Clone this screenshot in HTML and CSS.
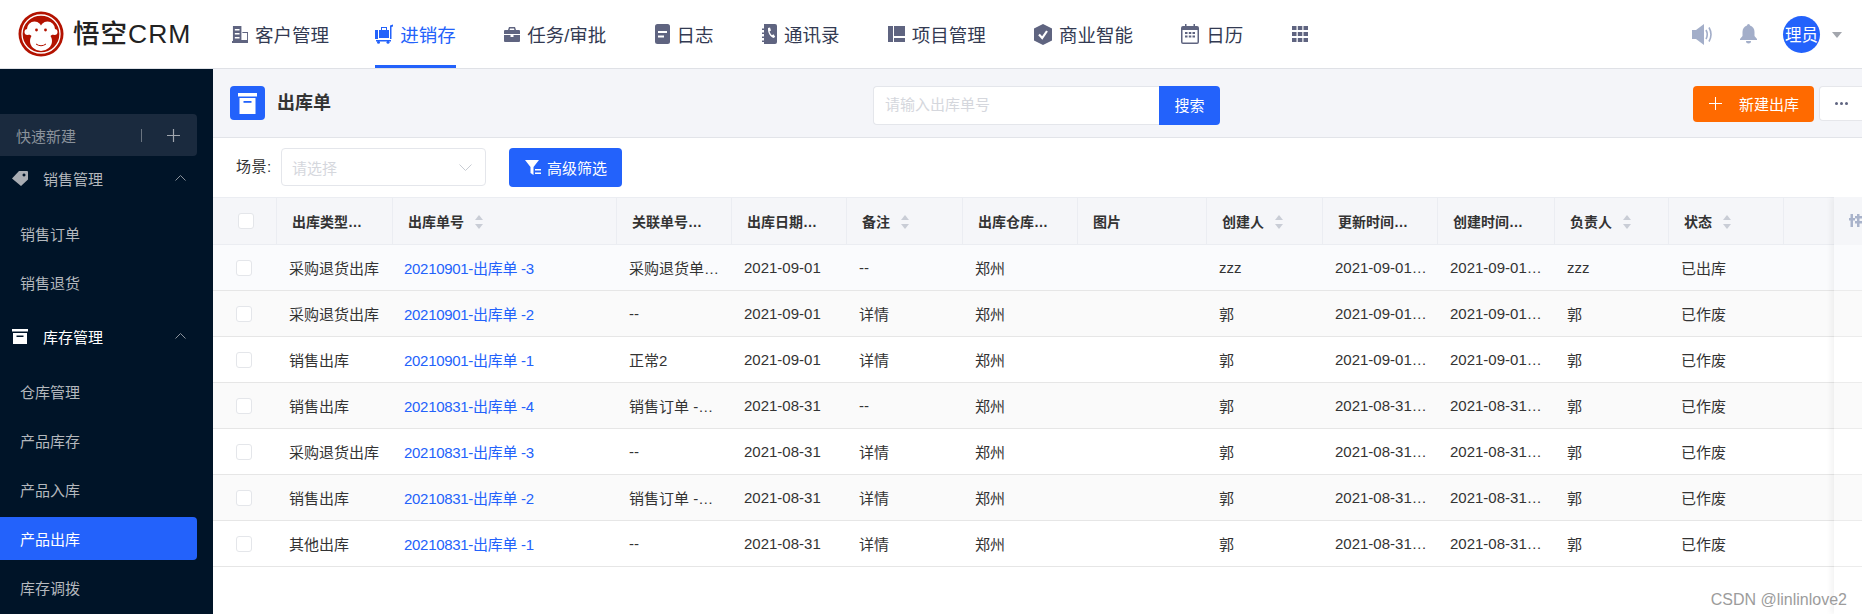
FILE: index.html
```html
<!DOCTYPE html>
<html lang="zh-CN">
<head>
    <meta charset="UTF-8">
    <title>悟空CRM - 出库单</title>
    <link rel="stylesheet" href="styles.css">
</head>
<body>
    <div class="app">
        <header class="navbar">
            <div class="logo">
                <svg width="46" height="46" viewBox="0 0 46 46">
                    <circle cx="23" cy="23" r="22.5" fill="#b31200"/>
                    <circle cx="23" cy="23" r="19" fill="none" stroke="#fff" stroke-width="1.3"/>
                    <circle cx="9.5" cy="21" r="3" fill="#fff"/>
                    <circle cx="36.5" cy="21" r="3" fill="#fff"/>
                    <circle cx="16.5" cy="18" r="7.5" fill="#fff"/>
                    <circle cx="29.5" cy="18" r="7.5" fill="#fff"/>
                    <ellipse cx="23" cy="30" rx="11" ry="10" fill="#fff"/>
                    <circle cx="18.5" cy="19" r="1.4" fill="#b31200"/>
                    <circle cx="27.5" cy="19" r="1.4" fill="#b31200"/>
                    <path d="M18 33q5 3.5 10 0" fill="none" stroke="#b31200" stroke-width="1"/>
                </svg>
                <span class="logo-text">悟空CRM</span>
            </div>
            <nav class="nav-list">
                <a class="nav-item">
                    <svg width="16" height="18" viewBox="0 0 17 18" preserveAspectRatio="none"><path fill="#5f6480" d="M1 1h9v14h6V8h-5V7h6v9h1v2H0v-2h1z"/><path fill="#fff" d="M3 4h5v1.6H3zM3 8h5v1.6H3zM3 12h5v1.6H3zM12 10h2v1.4h-2z"/></svg>
                    客户管理
                </a>
                <a class="nav-item active">
                    <svg width="18" height="20" viewBox="0 0 18 20"><path fill="#2362fb" d="M0 6h3v9H0zM4 6h2V3h6v3h2v8H4zM7 4v2h4V4zM15 1.500l3-1v2l-1.500.5V15h-1.500zM1 16h15v1.500H1z"/><circle cx="3.500" cy="18.300" r="1.500" fill="#2362fb"/><circle cx="13" cy="18.300" r="1.500" fill="#2362fb"/></svg>
                    进销存
                </a>
                <a class="nav-item">
                    <svg width="16" height="17" viewBox="0 0 16 17"><path fill="#5f6480" d="M5 1h6l1 3h3a1 1 0 0 1 1 1v3H0V5a1 1 0 0 1 1-1h3zM6 2.500L5.600 4h4.800L10 2.500zM0 9h6.500v2h3V9H16v6a1 1 0 0 1-1 1H1a1 1 0 0 1-1-1z"/></svg>
                    任务/审批
                </a>
                <a class="nav-item">
                    <svg width="15" height="20" viewBox="0 0 15 20"><rect width="15" height="20" rx="2.500" fill="#5f6480"/><path fill="#fff" d="M3 7h9v2H3zM3 11.500h6v2H3z"/></svg>
                    日志
                </a>
                <a class="nav-item">
                    <svg width="15" height="20" viewBox="0 0 15 20"><path fill="#5f6480" d="M2 0h11a2 2 0 0 1 2 2v16a2 2 0 0 1-2 2H2v-2H0v-1.500h2V14H0v-1.500h2V10H0V8.500h2V6H0V4.500h2z"/><path fill="#fff" d="M6 4l2-.5 1 3-1.500 1c.5 1.500 1.300 2.800 2.500 3.700l1.500-.9 1.700 2.500-1.500 1.200C8.500 13.500 5.500 8.500 6 4z"/></svg>
                    通讯录
                </a>
                <a class="nav-item">
                    <svg width="17" height="16" viewBox="0 0 17 16"><path fill="#5f6480" d="M0 0h5v16H0zM6 0h11v10H6zM6 12h11v4H6z"/></svg>
                    项目管理
                </a>
                <a class="nav-item">
                    <svg width="18" height="21" viewBox="0 0 18 21"><path fill="#5f6480" d="M9 0l9 4.500v12L9 21l-9-4.500v-12z"/><path fill="none" stroke="#fff" stroke-width="2.200" d="M5 10.500l3.200 3.500L13 7"/></svg>
                    商业智能
                </a>
                <a class="nav-item">
                    <svg width="18" height="20" viewBox="0 0 18 20"><path fill="#5f6480" d="M4 0h1.500v2h7V0H14v2h2a2 2 0 0 1 2 2v14a2 2 0 0 1-2 2H2a2 2 0 0 1-2-2V4a2 2 0 0 1 2-2h2zM1.500 6v12a.5.5 0 0 0 .5.5h14a.5.5 0 0 0 .5-.5V6z"/><path fill="#5f6480" d="M4 8h2.500v2H4zM7.800 8h2.500v2H7.800zM11.500 8H14v2h-2.500zM4 11.500h2.500v2H4zM7.800 11.500h2.500v2H7.800zM11.500 11.500H14v2h-2.500z"/></svg>
                    日历
                </a>
                <a class="nav-item">
                    <svg width="16" height="16" viewBox="0 0 16 16"><path fill="#5f6480" d="M0 0h4.500v4H0zM5.800 0h4.500v4H5.800zM11.500 0H16v4h-4.500zM0 6h4.500v4H0zM5.800 6h4.500v4H5.800zM11.500 6H16v4h-4.500zM0 12h4.500v4H0zM5.800 12h4.500v4H5.800zM11.500 12H16v4h-4.500z"/></svg>
                </a>
            </nav>
            <div class="nav-right">
                <svg class="speaker" width="20" height="21" viewBox="0 0 20 21"><path fill="#a3aec9" d="M0 6h4l8-6v21l-8-6H0z"/><path fill="none" stroke="#a3aec9" stroke-width="1.600" d="M14 6q2.500 4.500 0 9M17 3.500q4 7 0 14"/></svg>
                <svg class="bell" width="17" height="20" viewBox="0 0 17 20"><path fill="#a3aec9" d="M7 1.500a1.500 1.500 0 0 1 3 0C13 2.500 14.500 5 14.500 8v4l2.500 3v1H0v-1l2.500-3V8C2.500 5 4 2.500 7 1.500zM6 17h5a2.500 2.500 0 0 1-5 0z"/></svg>
                <div class="avatar">理员</div>
                <span class="caret"></span>
            </div>
        </header>

        <div class="layout">
            <aside class="sidebar">
                <div class="quick-add">
                    <span class="quick-text">快速新建</span>
                    <span class="quick-line"></span>
                    <svg width="13" height="13" viewBox="0 0 13 13"><path stroke="#a0a6ae" stroke-width="1.200" d="M6.500 0v13M0 6.500h13"/></svg>
                </div>

                <div class="menu-group">
                    <div class="menu-title">
                        <svg width="16" height="15" viewBox="0 0 16 15"><path fill="#a9adb3" d="M7 0h8a1 1 0 0 1 1 1v7.500L9 15 0 7.500zM12 2.500a1.500 1.500 0 1 0 .01 0z"/></svg>
                        <span>销售管理</span>
                        <svg class="chevron" width="11" height="6" viewBox="0 0 11 6"><path fill="none" stroke="#8b929b" d="M.5 5.500l5-5 5 5"/></svg>
                    </div>
                    <ul class="submenu">
                        <li>销售订单</li>
                        <li>销售退货</li>
                    </ul>
                </div>

                <div class="menu-group">
                    <div class="menu-title current">
                        <svg width="16" height="15" viewBox="0 0 16 15"><path fill="#fff" d="M0 0h16v2.500H0zM1 4h14v11H1z"/><path fill="#001428" d="M4.500 6.500h7V8h-7z"/></svg>
                        <span>库存管理</span>
                        <svg class="chevron" width="11" height="6" viewBox="0 0 11 6"><path fill="none" stroke="#8b929b" d="M.5 5.500l5-5 5 5"/></svg>
                    </div>
                    <ul class="submenu">
                        <li>仓库管理</li>
                        <li>产品库存</li>
                        <li>产品入库</li>
                        <li class="active">产品出库</li>
                        <li>库存调拨</li>
                    </ul>
                </div>
            </aside>

            <main class="main">
                <div class="page-head">
                    <div class="page-icon">
                        <svg width="19" height="21" viewBox="0 0 19 21"><path fill="#fff" d="M0 0h19v3.500H0zM1.500 5h16v16h-16z"/><path fill="#2362fb" d="M5.500 8h8v1.800h-8z"/></svg>
                    </div>
                    <h1 class="page-title">出库单</h1>
                    <div class="search">
                        <div class="search-input">请输入出库单号</div>
                        <button class="search-btn">搜索</button>
                    </div>
                    <div class="page-actions">
                        <button class="new-btn"><span class="new-plus"></span>新建出库</button>
                        <button class="more-btn"><i></i><i></i><i></i></button>
                    </div>
                </div>

                <div class="filter-bar">
                    <span class="filter-label">场景:</span>
                    <div class="select">
                        <span>请选择</span>
                        <svg width="13" height="7" viewBox="0 0 13 7"><path fill="none" stroke="#c8ccd3" d="M.5.500l6 6 6-6"/></svg>
                    </div>
                    <button class="filter-btn">
                        <svg width="16" height="15" viewBox="0 0 16 15"><path fill="#fff" d="M0 0h14L8.500 7v8l-3-2V7zM10 9h6v1.500h-6zM10 12.500h6V14h-6z"/></svg>
                        高级筛选
                    </button>
                </div>

                <div class="table-wrap">
                    <table class="data-table">
                        <colgroup>
                            <col class="c64"><col class="c116"><col class="c224"><col class="c115"><col class="c115"><col class="c116"><col class="c115"><col class="c129"><col class="c116"><col class="c115"><col class="c117"><col class="c114"><col class="c115"><col>
                        </colgroup>
                        <thead>
                            <tr>
                                <th class="check-head"><span class="checkbox"></span></th>
                                <th>出库类型…</th>
                                <th>出库单号<span class="sort"></span></th>
                                <th>关联单号…</th>
                                <th>出库日期…</th>
                                <th>备注<span class="sort"></span></th>
                                <th>出库仓库…</th>
                                <th>图片</th>
                                <th>创建人<span class="sort"></span></th>
                                <th>更新时间…</th>
                                <th>创建时间…</th>
                                <th>负责人<span class="sort"></span></th>
                                <th>状态<span class="sort"></span></th>
                                <th></th>
                            </tr>
                        </thead>
                        <tbody>
                            <tr class="hover">
                                <td class="check-cell"><span class="checkbox"></span></td>
                                <td>采购退货出库</td><td><a class="link">20210901-出库单 -3</a></td><td>采购退货单…</td><td>2021-09-01</td><td>--</td><td>郑州</td><td></td><td>zzz</td><td>2021-09-01…</td><td>2021-09-01…</td><td>zzz</td><td>已出库</td><td></td>
                            </tr>
                            <tr class="stripe">
                                <td class="check-cell"><span class="checkbox"></span></td>
                                <td>采购退货出库</td><td><a class="link">20210901-出库单 -2</a></td><td>--</td><td>2021-09-01</td><td>详情</td><td>郑州</td><td></td><td>郭</td><td>2021-09-01…</td><td>2021-09-01…</td><td>郭</td><td>已作废</td><td></td>
                            </tr>
                            <tr>
                                <td class="check-cell"><span class="checkbox"></span></td>
                                <td>销售出库</td><td><a class="link">20210901-出库单 -1</a></td><td>正常2</td><td>2021-09-01</td><td>详情</td><td>郑州</td><td></td><td>郭</td><td>2021-09-01…</td><td>2021-09-01…</td><td>郭</td><td>已作废</td><td></td>
                            </tr>
                            <tr class="stripe">
                                <td class="check-cell"><span class="checkbox"></span></td>
                                <td>销售出库</td><td><a class="link">20210831-出库单 -4</a></td><td>销售订单 -…</td><td>2021-08-31</td><td>--</td><td>郑州</td><td></td><td>郭</td><td>2021-08-31…</td><td>2021-08-31…</td><td>郭</td><td>已作废</td><td></td>
                            </tr>
                            <tr>
                                <td class="check-cell"><span class="checkbox"></span></td>
                                <td>采购退货出库</td><td><a class="link">20210831-出库单 -3</a></td><td>--</td><td>2021-08-31</td><td>详情</td><td>郑州</td><td></td><td>郭</td><td>2021-08-31…</td><td>2021-08-31…</td><td>郭</td><td>已作废</td><td></td>
                            </tr>
                            <tr class="stripe">
                                <td class="check-cell"><span class="checkbox"></span></td>
                                <td>销售出库</td><td><a class="link">20210831-出库单 -2</a></td><td>销售订单 -…</td><td>2021-08-31</td><td>详情</td><td>郑州</td><td></td><td>郭</td><td>2021-08-31…</td><td>2021-08-31…</td><td>郭</td><td>已作废</td><td></td>
                            </tr>
                            <tr>
                                <td class="check-cell"><span class="checkbox"></span></td>
                                <td>其他出库</td><td><a class="link">20210831-出库单 -1</a></td><td>--</td><td>2021-08-31</td><td>详情</td><td>郑州</td><td></td><td>郭</td><td>2021-08-31…</td><td>2021-08-31…</td><td>郭</td><td>已作废</td><td></td>
                            </tr>
                        </tbody>
                    </table>

                    <!-- fixed column that sits over the right end of the table -->
                    <div class="fixed-col">
                        <div class="fixed-head">
                            <svg width="14" height="13" viewBox="0 0 14 13"><path fill="#a9b3cb" d="M1.500 0h2.500v4h2v2.500H4V13H1.500V6.500H0V4h1.500zM8 0h2.500v2H14v2.500h-3.500v2.500H14v2.500h-3.500V13H8V9.500H6V7h2V4.500H6V2h2z"/></svg>
                        </div>
                        <div class="fixed-row hover"></div>
                        <div class="fixed-row stripe"></div>
                        <div class="fixed-row"></div>
                        <div class="fixed-row stripe"></div>
                        <div class="fixed-row"></div>
                        <div class="fixed-row stripe"></div>
                        <div class="fixed-row"></div>
                    </div>
                    <div class="watermark">CSDN @linlinlove2</div>
                </div>
            </main>
        </div>
    </div>
</body>
</html>
```
FILE: styles.css
```css
* {
    box-sizing: border-box;
}
html, body {
    height: 100%;
}
body {
    margin: 0;
    overflow: hidden;
    background: #fff;
    color: #333;
    font-family: "Liberation Sans", "Noto Sans CJK SC", sans-serif;
    font-size: 15px;
}
button {
    border: none;
    padding: 0;
    font-family: inherit;
    cursor: pointer;
}
.app {
    display: flex;
    flex-direction: column;
    height: 100vh;
}

/* top bar */
.navbar {
    display: flex;
    align-items: center;
    flex: none;
    height: 69px;
    padding: 0 20px 0 18px;
    background: #fff;
    border-bottom: 1px solid #dfe1e6;
}
.logo {
    display: flex;
    align-items: center;
    width: 214px;
    padding-bottom: 2px;
}
.logo svg {
    margin-top: 2px;
}
.logo-text {
    margin: 3px 0 0 9px;
    color: #222;
    font-size: 26.500px;
    font-weight: 500;
    letter-spacing: 1px;
    line-height: 1;
    white-space: nowrap;
}
.nav-list {
    display: flex;
    align-items: center;
    gap: 48.300px;
    height: 100%;
}
.nav-item {
    display: flex;
    align-items: center;
    gap: 7px;
    height: 68px;
    padding-top: 3px;
    border-bottom: 3px solid transparent;
    color: #333a52;
    font-size: 18.500px;
    white-space: nowrap;
}
.nav-item:first-child {
    margin-right: -2px;
}
.nav-item.active {
    border-bottom-color: #2362fb;
    color: #2362fb;
}
.nav-right {
    display: flex;
    align-items: center;
    margin-left: auto;
}
.bell {
    margin-left: 28px;
}
.avatar {
    display: flex;
    align-items: center;
    justify-content: center;
    width: 37px;
    height: 37px;
    margin-left: 26px;
    overflow: hidden;
    border-radius: 50%;
    background: #2362fb;
    color: #fff;
    font-size: 16.500px;
    white-space: nowrap;
}
.caret {
    width: 0;
    height: 0;
    margin: 2px 0 0 12px;
    border-left: 5.500px solid transparent;
    border-right: 5.500px solid transparent;
    border-top: 6px solid #a3a6ad;
}

.layout {
    display: flex;
    flex: 1;
    min-height: 0;
}

/* left menu */
.sidebar {
    flex: none;
    width: 213px;
    padding: 45px 16px 0 0;
    overflow: hidden;
    background: #001428;
    color: #b4b8bd;
}
.quick-add {
    display: flex;
    align-items: center;
    height: 42px;
    padding-left: 16px;
    border-radius: 0 4px 4px 0;
    background: #1a2a3e;
    color: #8b929b;
}
.quick-text {
    width: 125px;
}
.quick-line {
    width: 1px;
    height: 13px;
    margin-right: 25px;
    background: #6a7480;
}
.menu-group {
    margin-bottom: 11px;
    padding-top: 1px;
}
.menu-group + .menu-group {
    padding-top: 0;
}
.menu-title {
    display: flex;
    align-items: center;
    height: 42px;
    padding-left: 12px;
}
.menu-title span {
    margin-left: 15px;
}
.menu-title.current {
    color: #fff;
}
.chevron {
    margin-left: 72px;
}
.submenu {
    margin: 0;
    padding: 13px 0 0;
    list-style: none;
}
.submenu li {
    display: flex;
    align-items: center;
    height: 43px;
    margin-bottom: 6px;
    padding-left: 20px;
    border-radius: 0 4px 4px 0;
}
.submenu li.active {
    background: #2362fb;
    color: #fff;
}

/* content */
.main {
    position: relative;
    flex: 1;
    min-width: 0;
    overflow: hidden;
}
.page-head {
    display: flex;
    align-items: flex-start;
    height: 69px;
    padding: 17px 0 0 17px;
    background: #f4f5f9;
    border-bottom: 1px solid #e2e4e9;
}
.page-icon {
    display: flex;
    align-items: center;
    justify-content: center;
    width: 35px;
    height: 34px;
    border-radius: 4px;
    background: #2362fb;
}
.page-title {
    margin: 0 0 0 12px;
    color: #333;
    font-size: 18px;
    font-weight: 700;
    line-height: 34px;
}
.search {
    display: flex;
    height: 39px;
    margin-left: 542px;
}
.search-input {
    width: 286px;
    padding-left: 11px;
    border: 1px solid #e4e6eb;
    border-right: none;
    border-radius: 4px 0 0 4px;
    background: #fff;
    color: #d5d7dd;
    line-height: 35px;
}
.search-btn {
    width: 61px;
    padding-bottom: 2px;
    border-radius: 0 4px 4px 0;
    background: #2362fb;
    color: #fff;
    font-size: 15px;
}
.page-actions {
    display: flex;
    gap: 5px;
    margin-left: auto;
}
.new-btn {
    display: flex;
    align-items: center;
    width: 121px;
    height: 36px;
    padding: 0 0 2px 16px;
    border-radius: 4px;
    background: #ff6a00;
    color: #fff;
    font-size: 15px;
}
.new-plus {
    width: 13px;
    height: 13px;
    margin-right: 17px;
    background: linear-gradient(#fff, #fff) center/13px 1px no-repeat, linear-gradient(#fff, #fff) center/1px 13px no-repeat;
}
.more-btn {
    display: flex;
    align-items: center;
    justify-content: center;
    gap: 2px;
    width: 43px;
    height: 35px;
    border: 1px solid #e6e7eb;
    border-right: none;
    border-radius: 4px 0 0 4px;
    background: #fff;
}
.more-btn i {
    width: 3px;
    height: 3px;
    border-radius: 50%;
    background: #5f6480;
}

.filter-bar {
    display: flex;
    align-items: flex-start;
    height: 59px;
    padding: 10px 0 0 23px;
    background: #fff;
}
.filter-label {
    width: 45px;
    letter-spacing: .5px;
    line-height: 38px;
}
.select {
    display: flex;
    align-items: center;
    justify-content: space-between;
    width: 205px;
    height: 38px;
    padding: 0 13px 0 10px;
    border: 1px solid #e4e6eb;
    border-radius: 4px;
    color: #d5d7dd;
}
.filter-btn {
    display: flex;
    align-items: center;
    gap: 6px;
    width: 113px;
    height: 39px;
    margin-left: 23px;
    padding-left: 16px;
    border-radius: 4px;
    background: #2362fb;
    color: #fff;
    font-size: 15px;
}

/* table */
.table-wrap {
    position: relative;
    height: 417px;
    overflow: hidden;
}
.data-table {
    width: 100%;
    border-collapse: separate;
    border-spacing: 0;
    table-layout: fixed;
}
.c64 { width: 64px; }
.c114 { width: 114px; }
.c115 { width: 115px; }
.c116 { width: 116px; }
.c117 { width: 117px; }
.c129 { width: 129px; }
.c224 { width: 224px; }
.data-table th {
    height: 48px;
    padding: 0 0 0 15px;
    border-top: 1px solid #ebedf2;
    border-bottom: 1px solid #ebedf2;
    border-right: 1px solid #ebedf2;
    background: #f5f6f9;
    color: #333;
    font-size: 14px;
    font-weight: 700;
    text-align: left;
    white-space: nowrap;
}
.data-table th:last-child {
    border-right: none;
}
.data-table td {
    height: 46px;
    padding: 0 0 1px 12px;
    border-bottom: 1px solid #e6e6e6;
    color: #333;
    font-size: 15px;
    white-space: nowrap;
    overflow: hidden;
}
.data-table th.check-head {
    padding-left: 25px;
}
.data-table td.check-cell {
    padding: 0 0 0 23px;
}
.checkbox {
    display: block;
    width: 16px;
    height: 16px;
    border: 1px solid #e4e6ea;
    border-radius: 3px;
    background: #fff;
}
.stripe td {
    background: #fafafa;
}
.hover td {
    background: #fafbfd;
}
.link {
    margin-left: -1px;
    color: #2362fb;
    letter-spacing: -.3px;
}
.sort {
    display: inline-block;
    position: relative;
    width: 8px;
    height: 14px;
    margin-left: 11px;
    vertical-align: -2px;
}
.sort::before,
.sort::after {
    content: "";
    position: absolute;
    left: 0;
    border-left: 4px solid transparent;
    border-right: 4px solid transparent;
}
.sort::before {
    top: 0;
    border-bottom: 5px solid #c9cdd6;
}
.sort::after {
    bottom: 0;
    border-top: 5px solid #c9cdd6;
}
.fixed-col {
    position: absolute;
    top: 0;
    right: 0;
    bottom: 0;
    width: 28px;
    background: #fff;
    box-shadow: -3px 0 6px rgba(0, 0, 0, 0.05);
}
.fixed-head {
    display: flex;
    align-items: center;
    height: 48px;
    padding: 0 0 2px 15px;
    overflow: hidden;
    background: #f5f6f9;
}
.fixed-head svg {
    flex: none;
}
.fixed-row {
    height: 46px;
    border-bottom: 1px solid #ececec;
}
.fixed-row.stripe {
    background: #fafafa;
}
.fixed-row.hover {
    background: #fafbfd;
}
.watermark {
    position: absolute;
    right: 15px;
    bottom: 5px;
    color: #9c9c9c;
    font-size: 16px;
    white-space: nowrap;
}
```
